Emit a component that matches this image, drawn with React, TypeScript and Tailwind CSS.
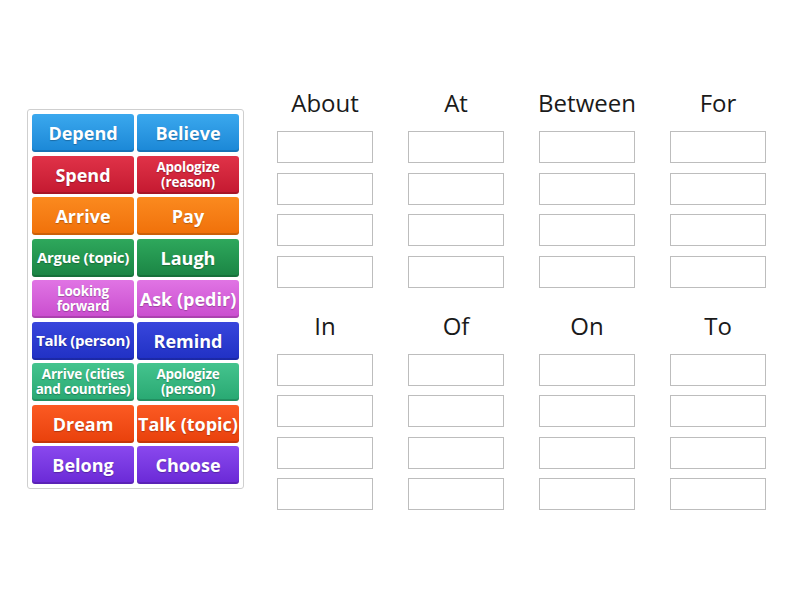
const tiles: { text: string; color: string; small?: boolean }[] = [
  { text: "Depend", color: "from-[#3aa8ee] to-[#1a87d6]" },
  { text: "Believe", color: "from-[#3aa8ee] to-[#1a87d6]" },
  { text: "Spend", color: "from-[#e03248] to-[#c41830]" },
  { text: "Apologize (reason)", color: "from-[#e03248] to-[#c41830]", small: true },
  { text: "Arrive", color: "from-[#fb8a1e] to-[#f07008]" },
  { text: "Pay", color: "from-[#fb8a1e] to-[#f07008]" },
  { text: "Argue (topic)", color: "from-[#2ea85c] to-[#1a8444]", small: true },
  { text: "Laugh", color: "from-[#2ea85c] to-[#1a8444]" },
  { text: "Looking forward", color: "from-[#e074e4] to-[#c94cce]", small: true },
  { text: "Ask (pedir)", color: "from-[#e074e4] to-[#c94cce]" },
  { text: "Talk (person)", color: "from-[#3846dc] to-[#2030c4]", small: true },
  { text: "Remind", color: "from-[#3846dc] to-[#2030c4]" },
  { text: "Arrive (cities and countries)", color: "from-[#44c48e] to-[#28a872]", small: true },
  { text: "Apologize (person)", color: "from-[#44c48e] to-[#28a872]", small: true },
  { text: "Dream", color: "from-[#fb5a22] to-[#e8400a]" },
  { text: "Talk (topic)", color: "from-[#fb5a22] to-[#e8400a]" },
  { text: "Belong", color: "from-[#8a48ee] to-[#6a28d6]" },
  { text: "Choose", color: "from-[#8a48ee] to-[#6a28d6]" },
];

const groups = [
  ["About", "At", "Between", "For"],
  ["In", "Of", "On", "To"],
];

function Tile({ text, color, small }: { text: string; color: string; small?: boolean }) {
  const oneLineSmall = text === "Argue (topic)" || text === "Talk (person)";
  return (
    <div
      className={`h-[38px] rounded-[3px] bg-gradient-to-b ${color} shadow-[inset_0_-2px_0_rgba(0,0,0,0.15)] flex items-center justify-center text-center text-white font-bold [text-shadow:0_1px_1px_rgba(0,0,0,0.25)] px-[2px]`}
    >
      {small ? (
        <span
          className={
            oneLineSmall
              ? "text-[15px] leading-none tracking-[-0.3px] whitespace-nowrap"
              : "text-[13.5px] leading-[15px] tracking-[-0.2px]"
          }
        >
          {text}
        </span>
      ) : (
        <span className="text-[18px] leading-none whitespace-nowrap">{text}</span>
      )}
    </div>
  );
}

export default function App() {
  return (
    <div
      className="w-[800px] h-[600px] bg-white flex items-start"
      style={{ fontFamily: '"Open Sans", "Noto Sans", sans-serif' }}
    >
      <div className="mt-[109px] ml-[27px] w-[217px] border border-[#cfcfcf] rounded-[3px] p-[4px] grid grid-cols-2 gap-x-[3px] gap-y-[3.5px]">
        {tiles.map((t) => (
          <Tile key={t.text} {...t} />
        ))}
      </div>
      <div className="ml-[33px] mt-[85px] flex flex-col gap-[20px]">
        {groups.map((g, gi) => (
          <div key={gi} className="grid grid-cols-[96px_96px_96px_96px] gap-x-[35px]">
            {g.map((h) => (
              <div key={h} className="flex flex-col">
                <div className="h-[36px] mb-[10px] flex items-center justify-center text-[24px] font-normal text-[#1a1a1a] whitespace-nowrap">
                  {h}
                </div>
                <div className="flex flex-col gap-[9.5px]">
                  {[0, 1, 2, 3].map((i) => (
                    <div key={i} className="h-[32px] border border-[#bdbdbd]" />
                  ))}
                </div>
              </div>
            ))}
          </div>
        ))}
      </div>
    </div>
  );
}
